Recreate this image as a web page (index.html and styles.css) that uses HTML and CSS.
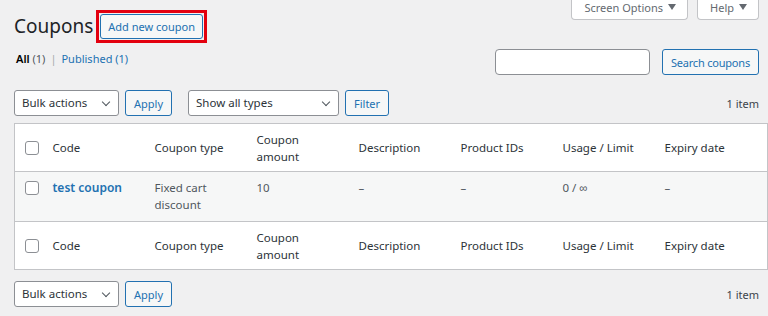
FILE: index.html
```html
<!DOCTYPE html>
<html lang="en">
<head>
    <meta charset="UTF-8">
    <title>Coupons</title>
    <link rel="stylesheet" href="styles.css">
</head>
<body>
<div class="wrap">
    <div class="screen-meta">
        <span class="meta-tab">Screen Options <i class="tri"></i></span>
        <span class="meta-tab">Help <i class="tri"></i></span>
    </div>
    <div class="head">
        <h1>Coupons</h1>
        <span class="highlight"><a class="page-action">Add new coupon</a></span>
    </div>
    <div class="filters-row">
        <ul class="subsubsub">
            <li><b>All</b> <span class="count">(1)</span></li>
            <li class="sep">|</li>
            <li><a>Published <span class="count">(1)</span></a></li>
        </ul>
        <div class="search-box">
            <input type="text" class="search-input">
            <button class="button search-btn">Search coupons</button>
        </div>
    </div>
    <div class="tablenav">
        <div class="actions">
            <span class="select w-bulk">Bulk actions</span>
            <button class="button">Apply</button>
        </div>
        <div class="actions">
            <span class="select w-type">Show all types</span>
            <button class="button">Filter</button>
        </div>
        <span class="num">1 item</span>
    </div>
    <table class="list-table">
        <thead>
        <tr>
            <td class="cb"><span class="check"></span></td>
            <th class="first">Code</th>
            <th>Coupon type</th>
            <th>Coupon<br>amount</th>
            <th>Description</th>
            <th>Product IDs</th>
            <th>Usage / Limit</th>
            <th>Expiry date</th>
        </tr>
        </thead>
        <tbody>
        <tr>
            <td class="cb"><span class="check"></span></td>
            <td class="first"><a class="row-title">test coupon</a></td>
            <td>Fixed cart<br>discount</td>
            <td>10</td>
            <td>–</td>
            <td>–</td>
            <td>0 / ∞</td>
            <td>–</td>
        </tr>
        </tbody>
        <tfoot>
        <tr>
            <td class="cb"><span class="check"></span></td>
            <th class="first">Code</th>
            <th>Coupon type</th>
            <th>Coupon<br>amount</th>
            <th>Description</th>
            <th>Product IDs</th>
            <th>Usage / Limit</th>
            <th>Expiry date</th>
        </tr>
        </tfoot>
    </table>
    <div class="tablenav bottom">
        <div class="actions">
            <span class="select w-bulk">Bulk actions</span>
            <button class="button">Apply</button>
        </div>
        <span class="num">1 item</span>
    </div>
</div>
</body>
</html>
```
FILE: styles.css
```css
body,div,ul,li,h1,table{margin:0;padding:0;}
ul{list-style-type:none;}
body{background:#f0f0f1;color:#3c434a;font:11.5px/17px "Noto Sans","Liberation Sans",sans-serif;}
a{color:#2271b1;text-decoration:none;}
.wrap{padding:0 9px 0 14px;}
.screen-meta{display:flex;justify-content:flex-end;gap:9px;}
.meta-tab{background:#fff;border:1px solid #c3c4c7;border-top:0;border-radius:0 0 4px 4px;height:19px;line-height:15px;padding:0 11px 0 12px;color:#646970;font-size:11px;display:flex;align-items:flex-start;gap:5px;}
.tri{width:0;height:0;border-left:4px solid transparent;border-right:4px solid transparent;border-top:6px solid #646970;margin-top:4px;}
.head{display:flex;align-items:center;gap:3px;margin-top:-10px;}
h1{font-size:19px;font-weight:400;color:#1d2327;line-height:29px;}
.highlight{border:3px solid #e3000f;padding:1px;}
.page-action{display:block;background:#f6f7f7;border:1px solid #2271b1;border-radius:3px;padding:0 7px;line-height:23px;font-size:11px;}
.filters-row{display:flex;justify-content:space-between;align-items:flex-start;margin-top:5px;}
.subsubsub{display:flex;gap:5px;margin-top:2px;padding-left:2px;font-size:11px;color:#646970;}
.subsubsub b{color:#000;font-weight:600;}
.subsubsub .count{color:#50575e;}
.subsubsub a .count{color:#2271b1;}
.sep{color:#a7aaad;}
.search-box{display:flex;gap:12px;margin-top:1px;}
.search-input{width:155px;height:26px;box-sizing:border-box;border:1px solid #8c8f94;border-radius:4px;background:#fff;}
.button{font:inherit;font-size:11px;color:#2271b1;background:#f6f7f7;border:1px solid #2271b1;border-radius:3px;height:26px;box-sizing:border-box;padding:0 8px;}
.search-btn{padding:0 8px;letter-spacing:-0.2px;}
.tablenav{display:flex;align-items:center;gap:16px;margin-top:15px;height:26px;}
.tablenav.bottom{margin-top:11px;}
.actions{display:flex;gap:6px;}
.select{display:block;box-sizing:border-box;height:26px;line-height:24px;border:1px solid #8c8f94;border-radius:3px;background:#fff;color:#2c3338;padding:0 7px;position:relative;}
.select:after{content:"";position:absolute;right:9px;top:8px;width:5px;height:5px;border-right:1.5px solid #50575e;border-bottom:1.5px solid #50575e;transform:rotate(45deg);}
.w-bulk{width:105px;}
.w-type{width:151px;}
.num{margin-left:auto;color:#3c434a;font-size:11px;}
.list-table{margin-top:7px;width:100%;border:1px solid #c3c4c7;border-collapse:collapse;background:#fff;table-layout:fixed;}
.list-table th,.list-table td{text-align:left;font-weight:400;padding:0 8px 0 0;vertical-align:middle;}
.list-table thead th,.list-table thead td{height:47px;border-bottom:1px solid #c3c4c7;color:#2c3338;}
.list-table tfoot th,.list-table tfoot td{height:47px;border-top:1px solid #c3c4c7;color:#2c3338;}
.list-table tbody tr{background:#f6f7f7;}
.list-table tbody td{height:50px;vertical-align:top;padding-top:7px;box-sizing:border-box;color:#50575e;}
.list-table .cb{width:38px;padding:0 0 0 10px;box-sizing:border-box;}
.list-table tbody .cb{padding-top:9px;}
.check{display:block;width:12px;height:12px;border:1px solid #8c8f94;border-radius:3px;background:#fff;}
.list-table th{width:94px;}
.row-title{font-weight:600;font-size:12px;}
```
